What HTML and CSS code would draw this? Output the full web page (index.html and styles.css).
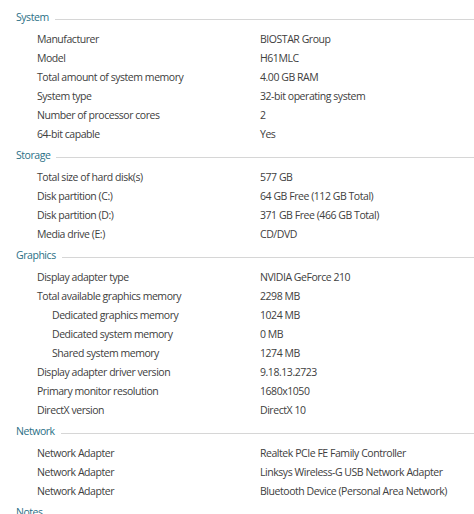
FILE: index.html
```html
<!DOCTYPE html>
<html>
<head>
<meta charset="utf-8">
<link rel="stylesheet" href="styles.css">
</head>
<body>
<div class="page">
  <section class="group">
    <div class="group-head"><span class="group-title">System</span><span class="group-line"></span></div>
    <div class="rows">
      <div class="label">Manufacturer</div><div class="value">BIOSTAR Group</div>
      <div class="label">Model</div><div class="value">H61MLC</div>
      <div class="label">Total amount of system memory</div><div class="value">4.00 GB RAM</div>
      <div class="label">System type</div><div class="value">32-bit operating system</div>
      <div class="label">Number of processor cores</div><div class="value">2</div>
      <div class="label">64-bit capable</div><div class="value">Yes</div>
    </div>
  </section>
  <section class="group">
    <div class="group-head"><span class="group-title">Storage</span><span class="group-line"></span></div>
    <div class="rows">
      <div class="label">Total size of hard disk(s)</div><div class="value">577 GB</div>
      <div class="label">Disk partition (C:)</div><div class="value">64 GB Free (112 GB Total)</div>
      <div class="label">Disk partition (D:)</div><div class="value">371 GB Free (466 GB Total)</div>
      <div class="label">Media drive (E:)</div><div class="value">CD/DVD</div>
    </div>
  </section>
  <section class="group">
    <div class="group-head"><span class="group-title">Graphics</span><span class="group-line"></span></div>
    <div class="rows">
      <div class="label">Display adapter type</div><div class="value">NVIDIA GeForce 210</div>
      <div class="label">Total available graphics memory</div><div class="value">2298 MB</div>
      <div class="label sub">Dedicated graphics memory</div><div class="value">1024 MB</div>
      <div class="label sub">Dedicated system memory</div><div class="value">0 MB</div>
      <div class="label sub">Shared system memory</div><div class="value">1274 MB</div>
      <div class="label">Display adapter driver version</div><div class="value">9.18.13.2723</div>
      <div class="label">Primary monitor resolution</div><div class="value">1680x1050</div>
      <div class="label">DirectX version</div><div class="value">DirectX 10</div>
    </div>
  </section>
  <section class="group">
    <div class="group-head"><span class="group-title">Network</span><span class="group-line"></span></div>
    <div class="rows">
      <div class="label">Network Adapter</div><div class="value">Realtek PCIe FE Family Controller</div>
      <div class="label">Network Adapter</div><div class="value">Linksys Wireless-G USB Network Adapter</div>
      <div class="label">Network Adapter</div><div class="value">Bluetooth Device (Personal Area Network)</div>
    </div>
  </section>
  <section class="group">
    <div class="group-head"><span class="group-title">Notes</span><span class="group-line"></span></div>
  </section>
</div>
</body>
</html>
```
FILE: styles.css
```css
html, body {
  margin: 0;
  padding: 0;
  background: #ffffff;
  overflow: hidden;
}
.page {
  padding-top: 5px;
  font-family: "Open Sans", "Noto Sans", sans-serif;
  font-size: 10.5px;
  letter-spacing: -0.45px;
  color: #404040;
}
.group-head {
  display: flex;
  align-items: center;
  height: 24px;
  padding-left: 16px;
  gap: 6px;
}
.group-title {
  color: #2b6f86;
  line-height: 24px;
}
.group-line {
  flex: 1;
  height: 1px;
  margin-top: 4px;
  background: #d6d6d6;
}
.rows {
  display: grid;
  grid-template-columns: 260px 1fr;
  grid-auto-rows: 19px;
  align-items: center;
}
.label {
  padding-left: 37px;
  white-space: nowrap;
}
.label.sub {
  padding-left: 52px;
}
.value {
  white-space: nowrap;
}
```
